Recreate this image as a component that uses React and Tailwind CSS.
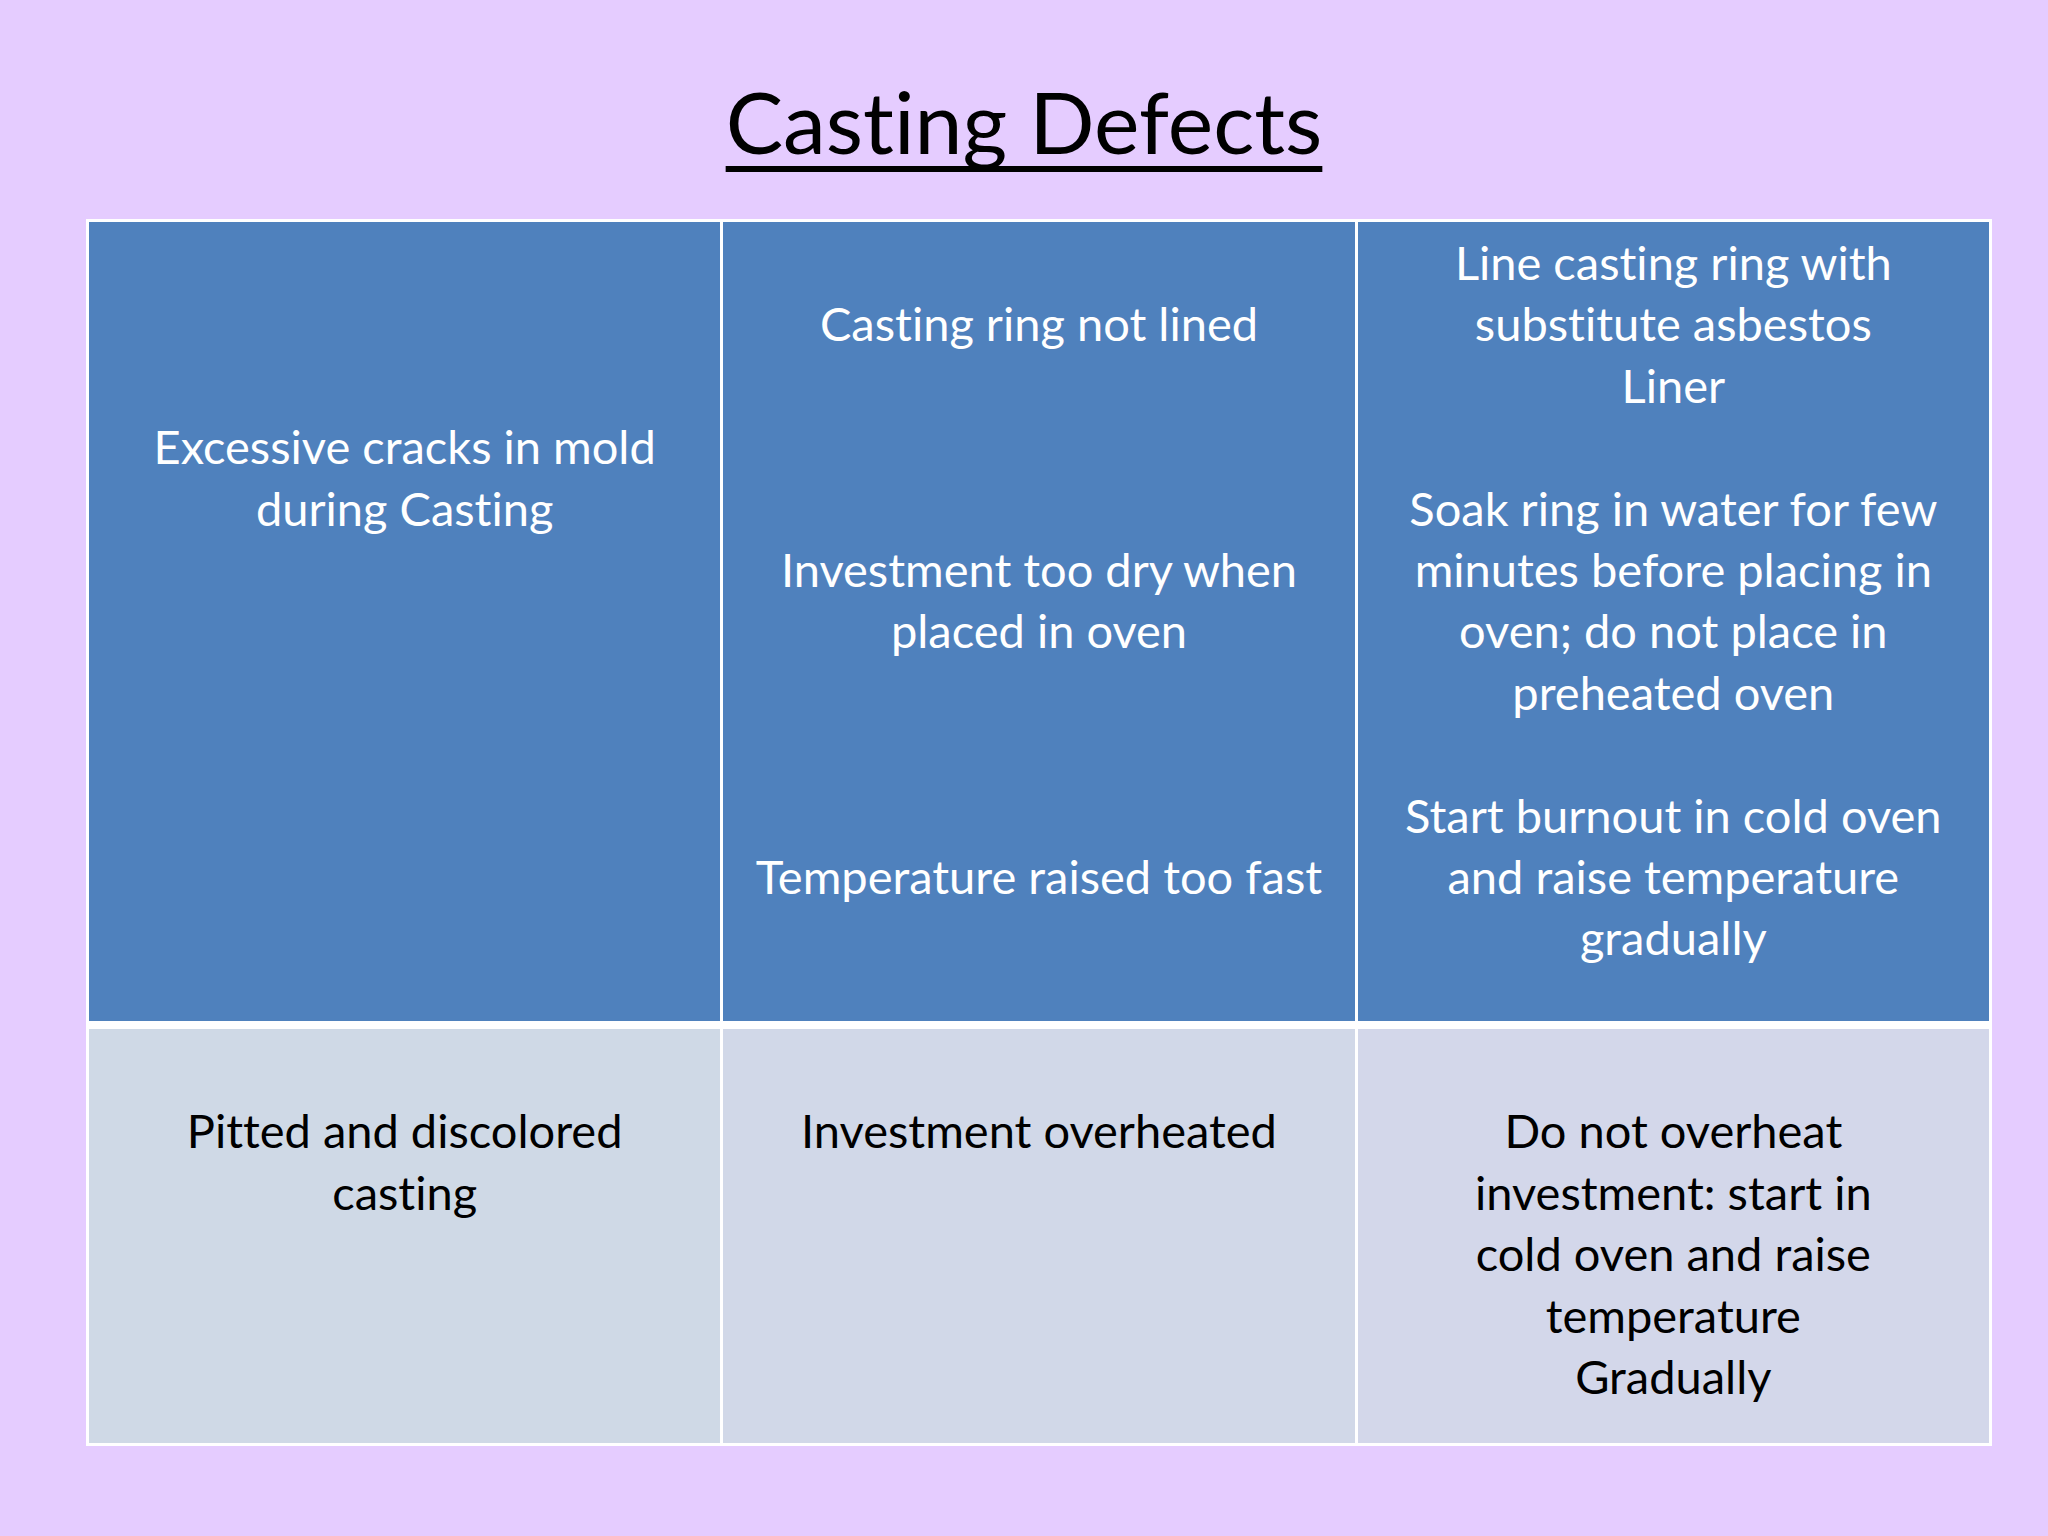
import React from "react";

// rows of the defects table; "" marks an empty paragraph line
const rows = [
  {
    tone: "dark",
    cells: [
      ["", "", "", "Excessive cracks in mold", "during Casting"],
      [
        "",
        "Casting ring not lined",
        "",
        "",
        "",
        "Investment too dry when",
        "placed in oven",
        "",
        "",
        "",
        "Temperature raised too fast",
      ],
      [
        "Line casting ring with",
        "substitute asbestos",
        "Liner",
        "",
        "Soak ring in water for few",
        "minutes before placing in",
        "oven; do not place in",
        "preheated oven",
        "",
        "Start burnout in cold oven",
        "and raise temperature",
        "gradually",
      ],
    ],
  },
  {
    tone: "light",
    cells: [
      ["", "Pitted and discolored", "casting"],
      ["", "Investment overheated"],
      [
        "",
        "Do not overheat",
        "investment: start in",
        "cold oven and raise",
        "temperature",
        "Gradually",
      ],
    ],
  },
];

const lightBg = ["bg-[#cfd9e6]", "bg-[#d1d8e8]", "bg-[#d3d7ea]"];

const Cell = ({ lines, tone, index }) => (
  <div
    className={`px-[20px] pt-[10px] text-center text-[47px] leading-[61.4px] ${
      tone === "dark"
        ? "bg-[#4f81bd] text-white h-[799px]"
        : `${lightBg[index]} text-black h-[414px]`
    }`}
  >
    {lines.map((line, i) => (
      <div key={i}>{line || "\u00a0"}</div>
    ))}
  </div>
);

const App = () => {
  return (
    <div className="w-[2048px] h-[1536px] bg-[#e5ccff] overflow-hidden font-[Lato,'Open_Sans',sans-serif] [font-variant-ligatures:none] [font-feature-settings:'liga'_0,'clig'_0,'dlig'_0]">
      {/* Title */}
      <div className="pt-[78px] flex justify-center">
        <h1 className="h-[87px] text-[86px] leading-none text-black underline decoration-[6px] underline-offset-[12px] [text-decoration-skip-ink:none]">
          Casting Defects
        </h1>
      </div>

      {/* Table */}
      <div className="mt-[54px] ml-[86px] w-[1906px] bg-white p-[3px] grid grid-cols-3 gap-x-[3px] gap-y-[8px]">
        {rows.map((row, r) =>
          row.cells.map((lines, c) => (
            <Cell key={`${r}-${c}`} lines={lines} tone={row.tone} index={c} />
          ))
        )}
      </div>
    </div>
  );
};

export default App;
